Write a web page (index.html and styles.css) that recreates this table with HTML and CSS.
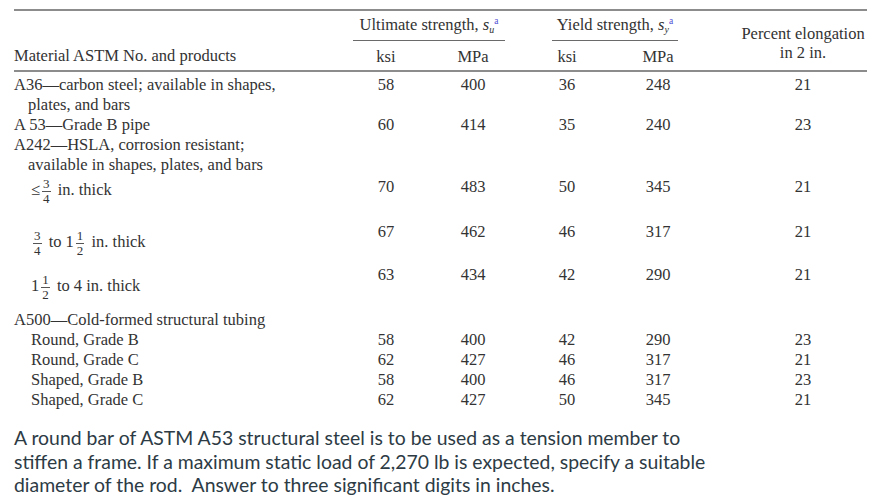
FILE: index.html
```html
<!DOCTYPE html>
<html lang="en">
<head>
<meta charset="utf-8">
<title>ASTM steel properties</title>
<link rel="stylesheet" href="styles.css">
</head>
<body>
<div class="page">
  <table class="props">
    <colgroup>
      <col class="c-mat">
      <col class="c-uk">
      <col class="c-um">
      <col class="c-yk">
      <col class="c-ym">
      <col class="c-el">
    </colgroup>
    <thead>
      <tr class="h1">
        <th rowspan="2" class="mat-h">Material ASTM No. and products</th>
        <th colspan="2" class="grp"><span class="grp-u">Ultimate strength, <i>s<sub>u</sub></i><sup>a</sup></span></th>
        <th colspan="2" class="grp"><span class="grp-y">Yield strength, <i>s<sub>y</sub></i><sup>a</sup></span></th>
        <th rowspan="2" class="elong">Percent elongation<br>in 2 in.</th>
      </tr>
      <tr class="h2">
        <th>ksi</th><th>MPa</th><th>ksi</th><th>MPa</th>
      </tr>
    </thead>
    <tbody>
      <tr class="first">
        <td class="mat"><div class="hang">A36—carbon steel; available in shapes,<br>plates, and bars</div></td>
        <td>58</td><td>400</td><td>36</td><td>248</td><td class="el">21</td>
      </tr>
      <tr>
        <td class="mat"><div class="hang">A 53—Grade B pipe</div></td>
        <td>60</td><td>414</td><td>35</td><td>240</td><td class="el">23</td>
      </tr>
      <tr>
        <td class="mat"><div class="hang">A242—HSLA, corrosion resistant;<br>available in shapes, plates, and bars</div></td>
        <td></td><td></td><td></td><td></td><td class="el"></td>
      </tr>
      <tr class="fr fr1">
        <td class="mat sub">≤<span class="frac"><span class="num">3</span><span class="den">4</span></span> in. thick</td>
        <td>70</td><td>483</td><td>50</td><td>345</td><td class="el">21</td>
      </tr>
      <tr class="fr fr2">
        <td class="mat sub"><span class="frac"><span class="num">3</span><span class="den">4</span></span> to 1<span class="frac"><span class="num">1</span><span class="den">2</span></span> in. thick</td>
        <td>67</td><td>462</td><td>46</td><td>317</td><td class="el">21</td>
      </tr>
      <tr class="fr fr3">
        <td class="mat sub">1<span class="frac"><span class="num">1</span><span class="den">2</span></span> to 4 in. thick</td>
        <td>63</td><td>434</td><td>42</td><td>290</td><td class="el">21</td>
      </tr>
      <tr>
        <td class="mat"><div class="hang">A500—Cold-formed structural tubing</div></td>
        <td></td><td></td><td></td><td></td><td class="el"></td>
      </tr>
      <tr>
        <td class="mat sub">Round, Grade B</td>
        <td>58</td><td>400</td><td>42</td><td>290</td><td class="el">23</td>
      </tr>
      <tr>
        <td class="mat sub">Round, Grade C</td>
        <td>62</td><td>427</td><td>46</td><td>317</td><td class="el">21</td>
      </tr>
      <tr>
        <td class="mat sub">Shaped, Grade B</td>
        <td>58</td><td>400</td><td>46</td><td>317</td><td class="el">23</td>
      </tr>
      <tr>
        <td class="mat sub">Shaped, Grade C</td>
        <td>62</td><td>427</td><td>50</td><td>345</td><td class="el">21</td>
      </tr>
    </tbody>
  </table>
  <p class="question">A round bar of ASTM A53 structural steel is to be used as a tension member to<br>stiffen a frame. If a maximum static load of 2,270 lb is expected, specify a suitable<br>diameter of the rod.&nbsp; Answer to three significant digits in inches.</p>
</div>
</body>
</html>
```

FILE: styles.css
```css
html, body {
  margin: 0;
  padding: 0;
  background: #ffffff;
}

.page {
  width: 883px;
  height: 501px;
  overflow: hidden;
}

.props {
  border-collapse: collapse;
  table-layout: fixed;
  width: 853px;
  margin: 9px 0 0 14px;
  font-family: "Liberation Serif", "Times New Roman", serif;
  font-size: 16.5px;
  color: #333333;
}

.c-mat { width: 336px; }
.c-uk { width: 72px; }
.c-um { width: 102px; }
.c-yk { width: 86px; }
.c-ym { width: 96px; }
.c-el { width: 161px; }

.props th {
  font-weight: normal;
  padding: 0;
  line-height: 20px;
  text-align: center;
}

.h1 th {
  border-top: 2px solid #8c8c8c;
}

.h2 th,
.mat-h,
.elong {
  border-bottom: 2px solid #8c8c8c;
}

.grp {
  padding-top: 4px !important;
  vertical-align: top;
}

.grp-u,
.grp-y {
  display: block;
  padding-bottom: 5px;
  border-bottom: 1px solid #6a6a6a;
}

.grp-u {
  margin: 0 19px 0 3px;
}

.grp-y {
  margin: 0 28px 0 28px;
}

.props sub {
  font-size: 10px;
  vertical-align: -3px;
  line-height: 0;
}

.props sup {
  font-size: 9.5px;
  color: #4f4fd4;
  vertical-align: 6px;
  line-height: 0;
}

.h2 th {
  padding: 6px 0 3px !important;
}

.mat-h {
  text-align: left !important;
  vertical-align: bottom;
  padding-bottom: 4px !important;
}

.elong {
  vertical-align: bottom;
  line-height: 19px !important;
  padding: 0 0 8px 33px !important;
}

.props td {
  padding: 0;
  line-height: 20px;
  text-align: center;
  vertical-align: top;
}

.props td.el {
  padding-left: 33px;
}

.props td.mat {
  text-align: left;
}

.hang {
  padding-left: 14px;
  text-indent: -14px;
}

.mat.sub {
  padding-left: 17px;
}

.first td {
  padding-top: 3px;
}

.frac {
  display: inline-flex;
  flex-direction: column;
  align-items: center;
  vertical-align: middle;
  font-size: 13px;
  line-height: 12px;
  margin: 0 3px 0 2px;
  text-indent: 0;
}

.frac .num {
  border-bottom: 1px solid #555555;
  padding: 0 1px 1px;
}

.frac .den {
  padding-top: 1px;
}

.fr1 td { height: 44px; }
.fr2 td { height: 35px; }
.fr3 td { height: 36px; }

.fr1 td:not(.mat) { padding-top: 2px; }

.fr1 td.mat { padding-top: 3px; }
.fr2 td.mat { padding-top: 8px; }
.fr3 td.mat { padding-top: 9px; }

.question {
  margin: 16px 0 0 14px;
  font-family: Lato, "Open Sans", sans-serif;
  font-size: 19.4px;
  line-height: 23.5px;
  color: #2d3b45;
}
```
